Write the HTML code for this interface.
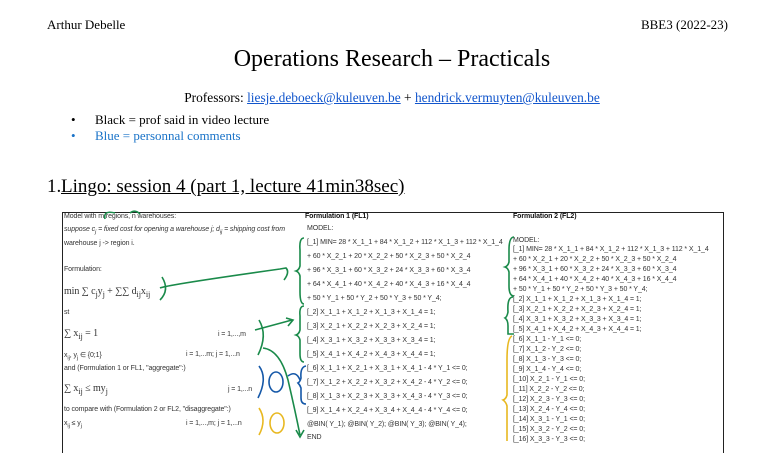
<!DOCTYPE html>
<html><head><meta charset="utf-8"><style>
body{margin:0;width:784px;height:441px;overflow:hidden;background:#fff;font-family:"Liberation Serif",serif;color:#000;position:relative}
.a{position:absolute;white-space:nowrap}
a{color:#1155cc;text-decoration:underline}
.s{font-family:"Liberation Sans",sans-serif;font-size:7px;color:#333;position:absolute;white-space:nowrap;letter-spacing:-0.1px}
.b{font-weight:bold;color:#111}
</style></head><body>
<div class="a" style="left:47px;top:17px;font-size:13px">Arthur Debelle</div>
<div class="a" style="left:368px;top:17px;font-size:13px;width:360px;text-align:right">BBE3 (2022-23)</div>
<div class="a" style="left:0;width:784px;text-align:center;top:46px;font-size:24px">Operations Research – Practicals</div>
<div class="a" style="left:0;width:784px;text-align:center;top:90px;font-size:13.4px">Professors: <a>liesje.deboeck@kuleuven.be</a> + <a>hendrick.vermuyten@kuleuven.be</a></div>
<div class="a" style="left:71px;top:112px;font-size:13px">•<span style="position:absolute;left:24px">Black = prof said in video lecture</span></div>
<div class="a" style="left:71px;top:128px;font-size:13px;color:#1a73c8">•<span style="position:absolute;left:24px">Blue = personnal comments</span></div>
<div class="a" style="left:47px;top:176px;font-size:19px">1.<span style="position:absolute;left:14px"><u>Lingo: session 4 (part 1, lecture 41min38sec)</u></span></div>

<div style="position:absolute;left:62px;top:212px;width:660px;height:240px;border:1.5px solid #222;border-bottom:none"></div>
<!-- left column -->
<div class="s" style="left:64px;top:213px">Model with m regions, n warehouses:</div>
<div class="s" style="left:64px;top:226px;font-style:italic">suppose c<sub>j</sub> = fixed cost for opening a warehouse j; d<sub>ij</sub> = shipping cost from</div>
<div class="s" style="left:64px;top:240px">warehouse j -&gt; region i.</div>
<div class="s" style="left:64px;top:266px">Formulation:</div>
<div class="s" style="left:64px;top:286px;font-size:10px;font-family:'Liberation Serif',serif">min ∑ c<sub>j</sub>y<sub>j</sub> + ∑∑ d<sub>ij</sub>x<sub>ij</sub></div>
<div class="s" style="left:64px;top:309px">st</div>
<div class="s" style="left:64px;top:328px;font-size:10px;font-family:'Liberation Serif',serif">∑ x<sub>ij</sub> = 1</div>
<div class="s" style="left:218px;top:331px">i = 1,...,m</div>
<div class="s" style="left:64px;top:351px">x<sub>ij</sub>, y<sub>j</sub> ∈ {0;1}</div>
<div class="s" style="left:186px;top:351px">i = 1,...m; j = 1,...n</div>
<div class="s" style="left:64px;top:365px">and (Formulation 1 or FL1, "aggregate":)</div>
<div class="s" style="left:64px;top:383px;font-size:10px;font-family:'Liberation Serif',serif">∑ x<sub>ij</sub> ≤ my<sub>j</sub></div>
<div class="s" style="left:228px;top:386px">j = 1,...n</div>
<div class="s" style="left:64px;top:406px">to compare with (Formulation 2 or FL2, "disaggregate":)</div>
<div class="s" style="left:64px;top:420px">x<sub>ij</sub> ≤ y<sub>j</sub></div>
<div class="s" style="left:186px;top:420px">i = 1,...,m; j = 1,...n</div>
<!-- FL1 -->
<div class="s b" style="left:305px;top:213px">Formulation 1 (FL1)</div>
<div class="s" style="left:307px;top:225px">MODEL:</div>
<div class="s" style="left:307px;top:239px">[_1] MIN= 28 * X_1_1 + 84 * X_1_2 + 112 * X_1_3 + 112 * X_1_4</div>
<div class="s" style="left:307px;top:253px">+ 60 * X_2_1 + 20 * X_2_2 + 50 * X_2_3 + 50 * X_2_4</div>
<div class="s" style="left:307px;top:267px">+ 96 * X_3_1 + 60 * X_3_2 + 24 * X_3_3 + 60 * X_3_4</div>
<div class="s" style="left:307px;top:281px">+ 64 * X_4_1 + 40 * X_4_2 + 40 * X_4_3 + 16 * X_4_4</div>
<div class="s" style="left:307px;top:295px">+ 50 * Y_1 + 50 * Y_2 + 50 * Y_3 + 50 * Y_4;</div>
<div class="s" style="left:307px;top:309px">[_2] X_1_1 + X_1_2 + X_1_3 + X_1_4 = 1;</div>
<div class="s" style="left:307px;top:323px">[_3] X_2_1 + X_2_2 + X_2_3 + X_2_4 = 1;</div>
<div class="s" style="left:307px;top:337px">[_4] X_3_1 + X_3_2 + X_3_3 + X_3_4 = 1;</div>
<div class="s" style="left:307px;top:351px">[_5] X_4_1 + X_4_2 + X_4_3 + X_4_4 = 1;</div>
<div class="s" style="left:307px;top:365px">[_6] X_1_1 + X_2_1 + X_3_1 + X_4_1 - 4 * Y_1 &lt;= 0;</div>
<div class="s" style="left:307px;top:379px">[_7] X_1_2 + X_2_2 + X_3_2 + X_4_2 - 4 * Y_2 &lt;= 0;</div>
<div class="s" style="left:307px;top:393px">[_8] X_1_3 + X_2_3 + X_3_3 + X_4_3 - 4 * Y_3 &lt;= 0;</div>
<div class="s" style="left:307px;top:407px">[_9] X_1_4 + X_2_4 + X_3_4 + X_4_4 - 4 * Y_4 &lt;= 0;</div>
<div class="s" style="left:307px;top:421px">@BIN( Y_1); @BIN( Y_2); @BIN( Y_3); @BIN( Y_4);</div>
<div class="s" style="left:307px;top:434px">END</div>
<!-- FL2 -->
<div class="s b" style="left:513px;top:213px">Formulation 2 (FL2)</div>
<div class="s" style="left:513px;top:237px">MODEL:</div>
<div class="s" style="left:513px;top:246px">[_1] MIN= 28 * X_1_1 + 84 * X_1_2 + 112 * X_1_3 + 112 * X_1_4</div>
<div class="s" style="left:513px;top:256px">+ 60 * X_2_1 + 20 * X_2_2 + 50 * X_2_3 + 50 * X_2_4</div>
<div class="s" style="left:513px;top:266px">+ 96 * X_3_1 + 60 * X_3_2 + 24 * X_3_3 + 60 * X_3_4</div>
<div class="s" style="left:513px;top:276px">+ 64 * X_4_1 + 40 * X_4_2 + 40 * X_4_3 + 16 * X_4_4</div>
<div class="s" style="left:513px;top:286px">+ 50 * Y_1 + 50 * Y_2 + 50 * Y_3 + 50 * Y_4;</div>
<div class="s" style="left:513px;top:296px">[_2] X_1_1 + X_1_2 + X_1_3 + X_1_4 = 1;</div>
<div class="s" style="left:513px;top:306px">[_3] X_2_1 + X_2_2 + X_2_3 + X_2_4 = 1;</div>
<div class="s" style="left:513px;top:316px">[_4] X_3_1 + X_3_2 + X_3_3 + X_3_4 = 1;</div>
<div class="s" style="left:513px;top:326px">[_5] X_4_1 + X_4_2 + X_4_3 + X_4_4 = 1;</div>
<div class="s" style="left:513px;top:336px">[_6] X_1_1 - Y_1 &lt;= 0;</div>
<div class="s" style="left:513px;top:346px">[_7] X_1_2 - Y_2 &lt;= 0;</div>
<div class="s" style="left:513px;top:356px">[_8] X_1_3 - Y_3 &lt;= 0;</div>
<div class="s" style="left:513px;top:366px">[_9] X_1_4 - Y_4 &lt;= 0;</div>
<div class="s" style="left:513px;top:376px">[_10] X_2_1 - Y_1 &lt;= 0;</div>
<div class="s" style="left:513px;top:386px">[_11] X_2_2 - Y_2 &lt;= 0;</div>
<div class="s" style="left:513px;top:396px">[_12] X_2_3 - Y_3 &lt;= 0;</div>
<div class="s" style="left:513px;top:406px">[_13] X_2_4 - Y_4 &lt;= 0;</div>
<div class="s" style="left:513px;top:416px">[_14] X_3_1 - Y_1 &lt;= 0;</div>
<div class="s" style="left:513px;top:426px">[_15] X_3_2 - Y_2 &lt;= 0;</div>
<div class="s" style="left:513px;top:436px">[_16] X_3_3 - Y_3 &lt;= 0;</div>
<svg width="784" height="441" style="position:absolute;left:0;top:0" fill="none" stroke-width="1.6">
<g stroke="#1a8a4a">
<path d="M304 238 Q299 238 300 250 L300 266 Q299 270 296 271 Q299 272 300 276 L300 292 Q300 304 304 304"/>
<path d="M304 306 Q299 306 300 316 L300 330 Q299 334 296 335 Q299 336 300 340 L300 354 Q300 362 304 362"/>
<path d="M160 288 Q166 285 280 269 M280 269 L286 268 Q290 272 284 280"/>
<path d="M162 277 Q170 290 160 300"/>
<path d="M255 330 L292 320 M286 318 L293 320 L288 326"/>
<path d="M259 320 Q268 335 258 355"/>
<path d="M263 348 Q280 350 288 380 Q295 410 300 435 M296 430 L300 437 L304 430"/>
<path d="M514 237 Q509 237 509 250 L509 262 Q508 266 505 267 Q508 268 509 272 L509 286 Q509 296 514 296 M513 297 Q507 297 508 312 Q507 317 505 318 Q508 320 508 326 L508 334 L514 334"/>
<path d="M105 219 Q103 210 115 213 M130 213 Q135 209 140 214"/>
</g>
<g stroke="#1558a8">
<path d="M259 366 Q268 378 258 398"/>
<ellipse cx="276" cy="382" rx="7" ry="10"/>
<path d="M288 376 Q296 370 300 380"/>
<path d="M306 366 Q300 367 301 378 Q300 382 298 383 Q300 385 301 388 L301 398 Q301 404 306 404"/>
</g>
<g stroke="#e8b820">
<path d="M259 408 Q267 420 259 435"/>
<ellipse cx="277" cy="423" rx="7" ry="10"/>
<path d="M512 336 Q507 338 507 360 L507 395 Q506 399 503 400 Q506 402 507 406 L507 441"/>
</g>
</svg>
</body></html>
